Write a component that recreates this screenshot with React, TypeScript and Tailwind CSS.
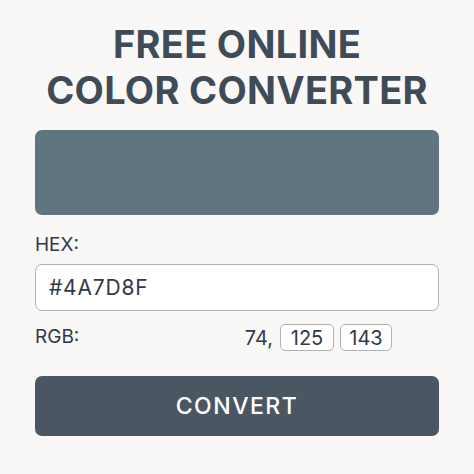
import React, { useState } from "react";

const hexToRgb = (hex: string) => {
  const clean = hex.replace("#", "");
  return [0, 2, 4].map((i) => parseInt(clean.slice(i, i + 2), 16));
};

const ColorConverter = () => {
  const [hex] = useState("#4A7D8F");
  const [r, g, b] = hexToRgb(hex);

  return (
    <div
      className="min-h-[474px] w-full bg-[#f9f8f6] px-[35px] pt-[21px]"
      style={{ fontFamily: "Inter, 'Noto Sans', sans-serif" }}
    >
      <h1 className="text-center text-[38px] font-bold leading-[46px] tracking-[0.3px] text-[#3f4b57]">
        FREE ONLINE
        <br />
        COLOR CONVERTER
      </h1>

      <div className="mt-[17px] h-[85px] rounded-[7px] bg-[#5f7580]" />

      <label className="mt-[17px] block text-[19px] leading-[26px] text-[#2f3a44]">HEX:</label>
      <input
        readOnly
        value={hex}
        className="mt-[6px] block h-[47px] w-full rounded-[7px] border border-[#b0b0b0] bg-white px-[13px] text-[21px] tracking-[0.8px] text-[#2f3a44] outline-none"
      />

      <div className="mt-[13px] flex h-[27px] items-center">
        <span className="text-[19px] text-[#2f3a44]">RGB:</span>
        <div className="ml-auto mr-[47px] flex items-center gap-[6px] text-[20px] text-[#2f3a44]">
          <span className="mr-[1px]">{r},</span>
          <span className="flex h-[27px] w-[54px] items-center justify-center rounded-[5px] border border-[#b0b0b0] bg-white">
            {g}
          </span>
          <span className="flex h-[27px] w-[52px] items-center justify-center rounded-[5px] border border-[#b0b0b0] bg-white">
            {b}
          </span>
        </div>
      </div>

      <button className="mt-[25px] flex h-[60px] w-full items-center justify-center rounded-[7px] bg-[#4a5763] text-[23px] font-medium tracking-[1.5px] text-white">
        CONVERT
      </button>
    </div>
  );
};

export default function App() {
  return <ColorConverter />;
}
